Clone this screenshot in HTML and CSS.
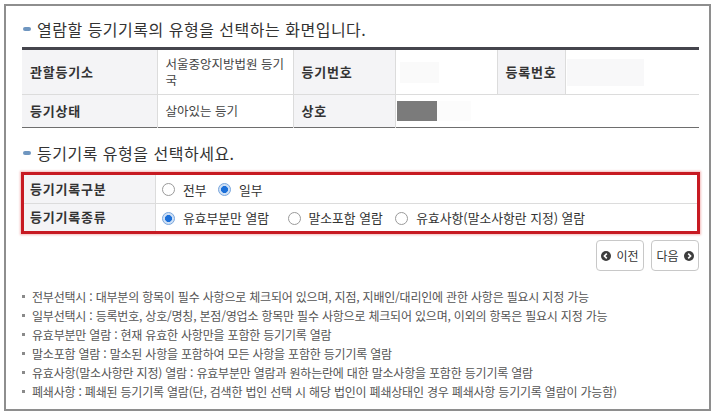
FILE: index.html
```html
<!DOCTYPE html>
<html lang="ko">
<head>
<meta charset="utf-8">
<title>등기기록 열람</title>
<link rel="stylesheet" href="styles.css">
</head>
<body>
<div class="frame">
  <h2 class="title"><span class="dot"></span>열람할 등기기록의 유형을 선택하는 화면입니다.</h2>
  <table class="info">
    <colgroup>
      <col class="c1"><col class="c2"><col class="c3"><col class="c4"><col class="c5"><col class="c6">
    </colgroup>
    <tr class="r1">
      <th>관할등기소</th>
      <td class="wrap">서울중앙지방법원 등기국</td>
      <th>등기번호</th>
      <td><span class="mask faint m1"></span></td>
      <th>등록번호</th>
      <td><span class="mask faint m2"></span></td>
    </tr>
    <tr class="r2">
      <th>등기상태</th>
      <td>살아있는 등기</td>
      <th>상호</th>
      <td colspan="3"><span class="mask dark"></span><span class="mask faint m3"></span></td>
    </tr>
  </table>

  <h2 class="title t2"><span class="dot"></span>등기기록 유형을 선택하세요.</h2>
  <table class="choose">
    <colgroup><col class="k1"><col></colgroup>
    <tr>
      <th>등기기록구분</th>
      <td>
        <label class="opt"><input type="radio" name="gubun"><span>전부</span></label>
        <label class="opt"><input type="radio" name="gubun" checked><span>일부</span></label>
      </td>
    </tr>
    <tr>
      <th>등기기록종류</th>
      <td>
        <label class="opt o1"><input type="radio" name="kind" checked><span>유효부분만 열람</span></label>
        <label class="opt o2"><input type="radio" name="kind"><span>말소포함 열람</span></label>
        <label class="opt"><input type="radio" name="kind"><span>유효사항(말소사항란 지정) 열람</span></label>
      </td>
    </tr>
  </table>

  <div class="btns">
    <button class="btn" type="button"><svg class="ico" viewBox="0 0 10 10" width="10" height="10"><circle cx="5" cy="5" r="5" fill="#3d3d3d"/><path d="M5.8 2.6 L3.4 5 L5.8 7.4" fill="none" stroke="#fff" stroke-width="1.6"/></svg>이전</button>
    <button class="btn" type="button">다음<svg class="ico" viewBox="0 0 10 10" width="10" height="10"><circle cx="5" cy="5" r="5" fill="#3d3d3d"/><path d="M4.2 2.6 L6.6 5 L4.2 7.4" fill="none" stroke="#fff" stroke-width="1.6"/></svg></button>
  </div>

  <ul class="notes">
    <li>전부선택시 : 대부분의 항목이 필수 사항으로 체크되어 있으며, 지점, 지배인/대리인에 관한 사항은 필요시 지정 가능</li>
    <li>일부선택시 : 등록번호, 상호/명칭, 본점/영업소 항목만 필수 사항으로 체크되어 있으며, 이외의 항목은 필요시 지정 가능</li>
    <li>유효부분만 열람 : 현재 유효한 사항만을 포함한 등기기록 열람</li>
    <li>말소포함 열람 : 말소된 사항을 포함하여 모든 사항을 포함한 등기기록 열람</li>
    <li>유효사항(말소사항란 지정) 열람 : 유효부분만 열람과 원하는란에 대한 말소사항을 포함한 등기기록 열람</li>
    <li>폐쇄사항 : 폐쇄된 등기기록 열람(단, 검색한 법인 선택 시 해당 법인이 폐쇄상태인 경우 폐쇄사항 등기기록 열람이 가능함)</li>
  </ul>
</div>
</body>
</html>
```

FILE: styles.css
```css
html, body {
  margin: 0;
  padding: 0;
  background: #fff;
}
body {
  font-family: "Noto Sans CJK KR", "Noto Sans", sans-serif;
  color: #333;
}
.frame {
  box-sizing: border-box;
  margin: 4px 5px 0 4px;
  height: 407px;
  border: 2px solid #8e8e8e;
  padding: 13px 10px 0 16px;
}
.title {
  display: flex;
  align-items: center;
  margin: 0;
  height: 20px;
  font-size: 16px;
  font-weight: normal;
  letter-spacing: 0.5px;
  color: #333;
}
.title.t2 {
  margin-top: 15px;
}
.dot {
  display: inline-block;
  width: 8px;
  height: 4px;
  border-radius: 2px;
  background: #6f96c0;
  margin: 0 6px 0 1px;
}
table {
  border-collapse: collapse;
  table-layout: fixed;
  width: 677px;
}
.info {
  margin-top: 8px;
  border-top: 3px solid #45454d;
  border-bottom: 1px solid #6e6e6e;
}
.info .c1 { width: 135px; }
.info .c2 { width: 136px; }
.info .c3 { width: 102px; }
.info .c4 { width: 102px; }
.info .c5 { width: 68px; }
.info .c6 { width: 134px; }
th, td {
  font-size: 12.5px;
  line-height: 16px;
  text-align: left;
  vertical-align: middle;
  border: 1px solid #dcdcdc;
  padding: 6px 4px 6px 8px;
}
th {
  background: #f4f4f6;
  font-size: 13px;
  font-weight: bold;
  letter-spacing: 0.8px;
  color: #333;
}
td {
  color: #444;
  background: #fff;
}
.info tr:first-child th, .info tr:first-child td { border-top: 0; }
.info tr:last-child th, .info tr:last-child td { border-bottom: 0; }
.info th:first-child, .choose th:first-child { border-left: 0; }
.info td:last-child, .choose td:last-child { border-right: 0; }
.info .r1 th, .info .r1 td { height: 29px; }
.info .r2 th, .info .r2 td { height: 16px; }
.mask {
  display: inline-block;
  vertical-align: middle;
}
.mask.dark {
  width: 40px;
  height: 20px;
  background: #7b7b7b;
}
.mask.faint.m1 {
  width: 39px;
  height: 21px;
  background: #fafafa;
  margin-left: -4px;
}
.mask.faint.m2 {
  width: 77px;
  height: 27px;
  background: #f8f8f9;
  margin-left: -7px;
}
.mask.faint.m3 {
  width: 34px;
  height: 20px;
  background: #fcfcfc;
}
.info .r2 td[colspan] { padding-left: 1px; }

.choose {
  margin-top: 9px;
  border: 3px solid #c71a22;
  box-shadow: 0 0 2px 1px rgba(220, 60, 60, 0.35);
  width: 679px;
  margin-left: -1px;
}
.choose .k1 { width: 133px; }
.choose th, .choose td {
  height: 16px;
  padding: 5px 4px 5px 6px;
}
.choose tr:first-child th, .choose tr:first-child td { border-top: 0; }
.choose tr:last-child th, .choose tr:last-child td { border-bottom: 0; }
.opt {
  display: inline-flex;
  align-items: center;
  height: 16px;
  line-height: 16px;
  margin-right: 8px;
  font-size: 12.8px;
  color: #333;
  vertical-align: middle;
}
.opt.o1 { margin-right: 15px; }
.opt.o2 { margin-right: 9px; }
.opt input {
  appearance: none;
  -webkit-appearance: none;
  box-sizing: border-box;
  width: 13px;
  height: 13px;
  margin: 0 8px 0 0;
  border: 1px solid #9a9a9a;
  border-radius: 50%;
  background: #fff;
}
.opt input:checked {
  border-color: #7aa7dd;
  background: radial-gradient(circle, #1b6fd8 0 3.2px, #cfe0f5 3.8px 100%);
}

.btns {
  display: flex;
  justify-content: flex-end;
  gap: 7px;
  margin-top: 6px;
}
.btn {
  box-sizing: border-box;
  display: inline-flex;
  align-items: center;
  justify-content: center;
  gap: 5px;
  width: 48px;
  height: 31px;
  padding: 0;
  border: 1px solid #c8c8c8;
  border-radius: 4px;
  background: #fff;
  font-family: "Noto Sans CJK KR", sans-serif;
  font-size: 12px;
  color: #333;
}
.ico { flex: none; }

.notes {
  list-style: none;
  margin: 16px 0 0 0;
  padding: 0;
}
.notes li {
  position: relative;
  padding-left: 10px;
  font-size: 12px;
  line-height: 19px;
  letter-spacing: -0.2px;
  color: #555;
  white-space: nowrap;
}
.notes li::before {
  content: "";
  position: absolute;
  left: 0;
  top: 8px;
  width: 3px;
  height: 3px;
  background: #8a8a8a;
}
```
